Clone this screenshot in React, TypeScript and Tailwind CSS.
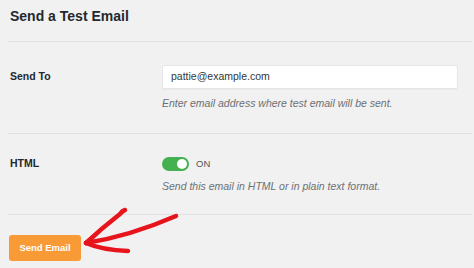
export default function App() {
  return (
    <div
      className="relative h-[268px] w-[474px] overflow-hidden bg-[#f1f1f1] pl-[8px] pr-[2px] text-[#23282d]"
      style={{ fontFamily: '"Liberation Sans", Arial, sans-serif' }}
    >
      <div className="h-[42px] border-b border-[#e2e2e2] pl-[2px] pt-[8px]">
        <h2 className="text-[14px] font-bold leading-[17px]">Send a Test Email</h2>
      </div>

      {/* Send To */}
      <div className="flex border-b border-[#e2e2e2] pb-[23px] pl-[2px] pt-[23px]">
        <div className="flex h-[24px] w-[152px] items-center text-[10.5px] font-bold">Send To</div>
        <div className="flex flex-col">
          <div className="flex h-[24px] w-[296px] items-center rounded-[2px] border border-[#e6e6e6] bg-white px-[8px] text-[10.5px] text-[#32373c] shadow-[0_1px_1px_rgba(0,0,0,0.03)]">
            pattie@example.com
          </div>
          <p className="mt-[7px] text-[10.5px] italic leading-[14px] text-[#6c7075]">
            Enter email address where test email will be sent.
          </p>
        </div>
      </div>

      {/* HTML */}
      <div className="flex border-b border-[#e2e2e2] pb-[21px] pl-[2px] pt-[23px]">
        <div className="flex h-[14px] w-[152px] items-center text-[10.5px] font-bold">HTML</div>
        <div className="flex flex-col">
          <div className="flex h-[14px] items-center gap-[7px]">
            <span className="flex h-[14px] w-[27px] items-center justify-end rounded-full bg-[#44b04f] pr-[2px]">
              <span className="h-[10px] w-[10px] rounded-full bg-white" />
            </span>
            <span className="text-[9.5px] text-[#555]">ON</span>
          </div>
          <p className="mt-[8px] text-[10.5px] italic leading-[14px] text-[#6c7075]">
            Send this email in HTML or in plain text format.
          </p>
        </div>
      </div>

      <div className="pl-[1px] pt-[20px]">
        <button className="flex h-[26px] w-[72px] items-center justify-center rounded-[3px] bg-[#f89b37] text-[9.5px] font-bold text-white">
          Send Email
        </button>
      </div>

      {/* hand-drawn arrow */}
      <svg
        className="pointer-events-none absolute left-0 top-0"
        width="474"
        height="268"
        viewBox="0 0 474 268"
        fill="none"
        stroke="#e8141c"
        strokeWidth="4.5"
        strokeLinecap="round"
        strokeLinejoin="round"
      >
        <path d="M176 216 Q130 236 86 243" />
        <path d="M125 210 Q122 211 120 214 Q102 228 86 243" />
        <path d="M86 243 Q102 250 128 251" />
      </svg>
    </div>
  )
}
